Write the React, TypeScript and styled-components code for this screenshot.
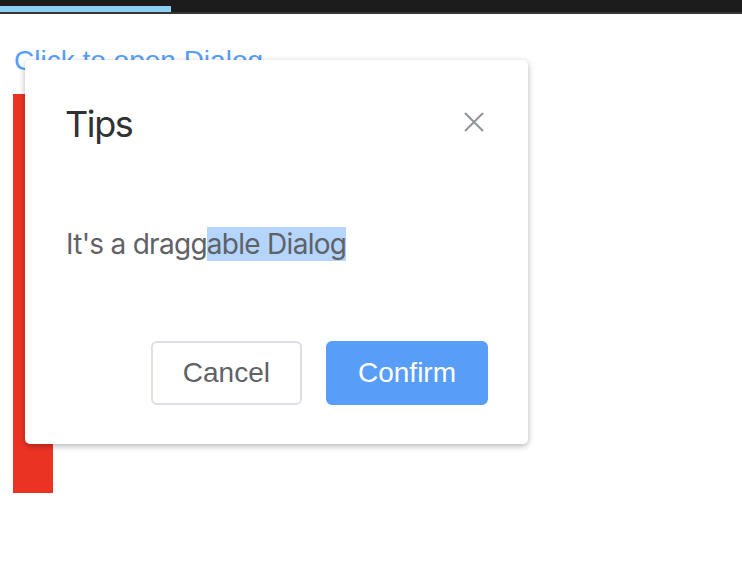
import React from "react";
import styled, { createGlobalStyle } from "styled-components";

const GlobalStyle = createGlobalStyle`
  html, body { margin: 0; padding: 0; background: #ffffff; }
  #root { min-height: 566px; position: relative; }
`;

const Page = styled.div`
  position: relative;
  width: 742px;
  height: 566px;
  overflow: hidden;
  background: #ffffff;
`;

const TopBar = styled.div`
  height: 6px;
  padding-top: 6px;
  background: #1c1c1c;
  border-bottom: 2px solid #363636;
`;

const Progress = styled.div<{ $w: number }>`
  width: ${(p) => p.$w}px;
  height: 6px;
  background: #8ecff5;
`;

const Content = styled.div`
  padding: 31px 0 0 13px;
  display: flex;
  flex-direction: column;
  align-items: flex-start;
`;

const OpenLink = styled.a`
  display: block;
  padding-left: 1px;
  font-family: "Liberation Sans", Arial, sans-serif;
  font-size: 28px;
  line-height: 32px;
  color: #589ef8;
  text-decoration: none;
  cursor: pointer;
`;

const RedBlock = styled.div`
  margin-top: 17px;
  width: 40px;
  height: 399px;
  background: #eb3324;
`;

const Dialog = styled.div`
  position: absolute;
  left: 25px;
  top: 60px;
  width: 503px;
  background: #ffffff;
  border-radius: 5px;
  box-shadow: 0 2px 6px rgba(0, 0, 0, 0.3);
  display: flex;
  flex-direction: column;
`;

const Header = styled.div`
  display: flex;
  align-items: center;
  justify-content: space-between;
  padding: 40px 44px 20px 40px;
`;

const Title = styled.span`
  font-family: Inter, "Noto Sans", sans-serif;
  font-size: 36px;
  line-height: 48px;
  letter-spacing: -1.4px;
  color: #303133;
`;

const CloseBtn = styled.button`
  display: flex;
  align-items: center;
  justify-content: center;
  width: 20px;
  height: 20px;
  margin-top: -4px;
  padding: 0;
  border: none;
  background: transparent;
  cursor: pointer;
`;

const Body = styled.div`
  padding: 59px 40px 60px 41px;
  font-family: Inter, "Noto Sans", sans-serif;
  font-size: 28px;
  line-height: normal;
  letter-spacing: -0.72px;
  color: #606266;
`;

const Selected = styled.span`
  background: #b4d5fe;
`;

const Footer = styled.div`
  display: flex;
  justify-content: flex-end;
  gap: 24px;
  padding: 20px 40px 39px;
`;

const Button = styled.button<{ $primary?: boolean }>`
  height: 64px;
  padding: 0 30px;
  border-radius: 6px;
  border: 2px solid ${(p) => (p.$primary ? "#589ef8" : "#dcdfe6")};
  background: ${(p) => (p.$primary ? "#589ef8" : "#ffffff")};
  color: ${(p) => (p.$primary ? "#ffffff" : "#606266")};
  font-family: "Liberation Sans", Arial, sans-serif;
  font-size: 28px;
  line-height: 1;
  cursor: pointer;
`;

export default function App() {
  return (
    <Page>
      <GlobalStyle />
      <TopBar>
        <Progress $w={171} />
      </TopBar>
      <Content>
        <OpenLink>Click to open Dialog</OpenLink>
        <RedBlock />
      </Content>
      <Dialog>
        <Header>
          <Title>Tips</Title>
          <CloseBtn aria-label="Close">
            <svg width="20" height="20" viewBox="0 0 20 20">
              <path d="M1 1 L19 19 M19 1 L1 19" stroke="#909399" strokeWidth="2" fill="none" />
            </svg>
          </CloseBtn>
        </Header>
        <Body>
          It's a dragg<Selected>able Dialog</Selected>
        </Body>
        <Footer>
          <Button>Cancel</Button>
          <Button $primary>Confirm</Button>
        </Footer>
      </Dialog>
    </Page>
  );
}
